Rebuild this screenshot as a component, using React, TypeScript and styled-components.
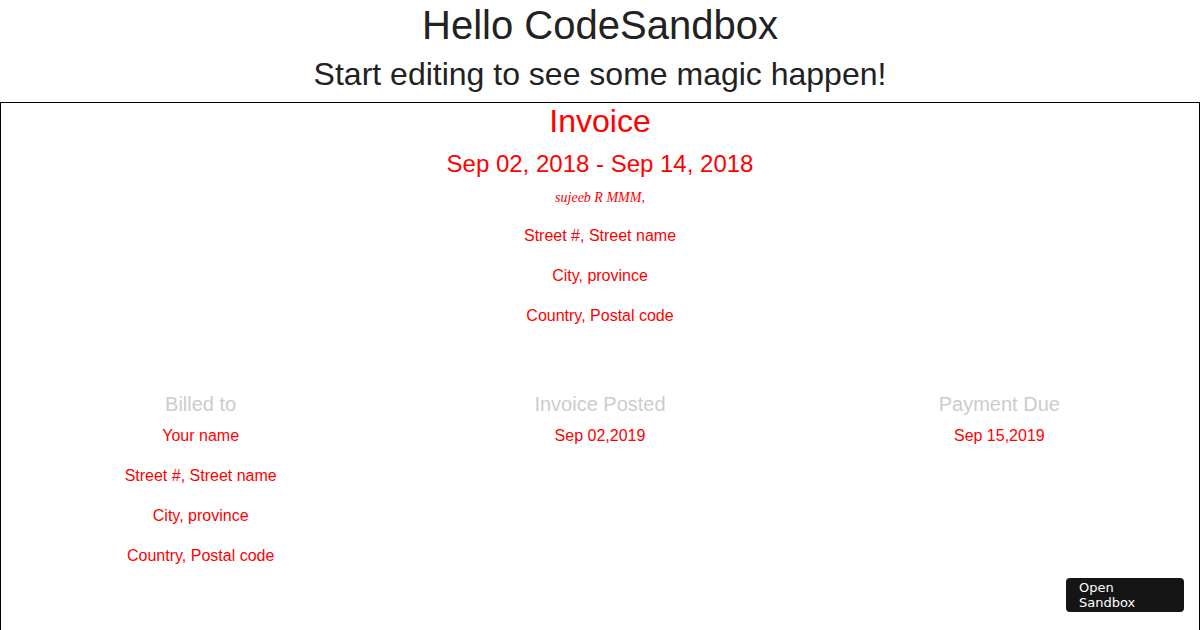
import React from 'react';
import styled, { createGlobalStyle } from 'styled-components';

const GlobalStyle = createGlobalStyle`
  body {
    margin: 0;
    background: #ffffff;
    font-family: "Liberation Sans", Arial, sans-serif;
  }
`;

const AppContainer = styled.div`
  text-align: center;
  color: #222222;
`;

const Title = styled.h1`
  margin: 2px 0 0;
  font-size: 40px;
  font-weight: 400;
  line-height: 46px;
`;

const Subtitle = styled.h2`
  margin: 8px 0 0;
  font-size: 32px;
  font-weight: 400;
  line-height: 37px;
`;

const InvoiceBox = styled.section`
  margin-top: 9px;
  border: 1px solid #000000;
  min-height: 530px;
  color: #ff0000;
`;

const InvoiceTitle = styled.div`
  font-size: 32px;
  line-height: 37px;
`;

const DateRange = styled.div`
  margin-top: 10px;
  font-size: 24px;
  line-height: 28px;
`;

const Signature = styled.div`
  margin-top: 12px;
  font-family: "Liberation Serif", "Times New Roman", serif;
  font-style: italic;
  font-size: 14px;
  line-height: 16px;
`;

const AddressBlock = styled.div<{ $offset: number }>`
  display: flex;
  flex-direction: column;
  gap: 16px;
  margin-top: ${(p) => p.$offset}px;
`;

const AddressLine = styled.p`
  margin: 0;
  font-size: 16px;
  line-height: 24px;
`;

const Columns = styled.div`
  display: grid;
  grid-template-columns: repeat(3, 1fr);
  margin-top: 65px;
`;

const Column = styled.div`
  display: flex;
  flex-direction: column;
`;

const ColumnLabel = styled.div`
  font-size: 20px;
  line-height: 23px;
  color: #cccccc;
`;

const OpenButton = styled.a`
  position: fixed;
  right: 16px;
  bottom: 18px;
  box-sizing: border-box;
  width: 118px;
  padding: 2px 40px 2px 13px;
  border-radius: 4px;
  background: #151515;
  color: #ffffff;
  font-family: "DejaVu Sans", Verdana, sans-serif;
  font-size: 13px;
  line-height: 15px;
  text-align: left;
  text-decoration: none;
  cursor: pointer;
`;

const senderAddress = ['Street #, Street name', 'City, province', 'Country, Postal code'];
const billedAddress = ['Your name', ...senderAddress];

export default function App() {
  return (
    <AppContainer>
      <GlobalStyle />
      <Title>Hello CodeSandbox</Title>
      <Subtitle>Start editing to see some magic happen!</Subtitle>

      <InvoiceBox>
        <InvoiceTitle>Invoice</InvoiceTitle>
        <DateRange>Sep 02, 2018 - Sep 14, 2018</DateRange>
        <Signature>sujeeb R MMM,</Signature>
        <AddressBlock $offset={18}>
          {senderAddress.map((line) => (
            <AddressLine key={line}>{line}</AddressLine>
          ))}
        </AddressBlock>

        <Columns>
          <Column>
            <ColumnLabel>Billed to</ColumnLabel>
            <AddressBlock $offset={8}>
              {billedAddress.map((line) => (
                <AddressLine key={line}>{line}</AddressLine>
              ))}
            </AddressBlock>
          </Column>
          <Column>
            <ColumnLabel>Invoice Posted</ColumnLabel>
            <AddressBlock $offset={8}>
              <AddressLine>Sep 02,2019</AddressLine>
            </AddressBlock>
          </Column>
          <Column>
            <ColumnLabel>Payment Due</ColumnLabel>
            <AddressBlock $offset={8}>
              <AddressLine>Sep 15,2019</AddressLine>
            </AddressBlock>
          </Column>
        </Columns>
      </InvoiceBox>

      <OpenButton>Open Sandbox</OpenButton>
    </AppContainer>
  );
}
